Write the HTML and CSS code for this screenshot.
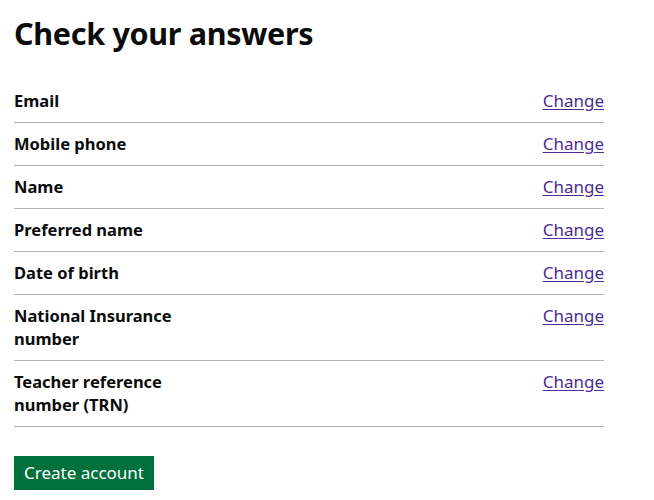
FILE: index.html
```html
<!DOCTYPE html>
<html lang="en">
<head>
<meta charset="utf-8">
<title>Check your answers</title>
<link rel="stylesheet" href="styles.css">
</head>
<body>
<main class="page">
  <h1 class="heading">Check your answers</h1>
  <dl class="summary">
    <div class="row"><dt class="key">Email</dt><dd class="actions"><a class="link" href="#">Change</a></dd></div>
    <div class="row"><dt class="key">Mobile phone</dt><dd class="actions"><a class="link" href="#">Change</a></dd></div>
    <div class="row"><dt class="key">Name</dt><dd class="actions"><a class="link" href="#">Change</a></dd></div>
    <div class="row"><dt class="key">Preferred name</dt><dd class="actions"><a class="link" href="#">Change</a></dd></div>
    <div class="row"><dt class="key">Date of birth</dt><dd class="actions"><a class="link" href="#">Change</a></dd></div>
    <div class="row"><dt class="key">National Insurance number</dt><dd class="actions"><a class="link" href="#">Change</a></dd></div>
    <div class="row"><dt class="key">Teacher reference number (TRN)</dt><dd class="actions"><a class="link" href="#">Change</a></dd></div>
  </dl>
  <button class="button" type="button">Create account</button>
</main>
</body>
</html>
```
FILE: styles.css
```css
html, body {
  margin: 0;
  padding: 0;
  background: #ffffff;
}
body {
  font-family: "Noto Sans", "Liberation Sans", Arial, sans-serif;
  color: #0b0c0c;
}
.page {
  padding: 13px 50px 0 14px;
}
.heading {
  margin: 0 0 27px;
  font-size: 30.5px;
  line-height: 40px;
  font-weight: 700;
  letter-spacing: -0.3px;
}
.summary {
  margin: 0 0 29px;
  padding: 0;
}
.row {
  display: flex;
  border-bottom: 1px solid #b1b4b6;
  padding: 9px 0 10px;
}
.key {
  width: 30%;
  margin: 0;
  font-size: 16.5px;
  line-height: 23px;
  font-weight: 700;
}
.actions {
  flex: 1;
  margin: 0;
  text-align: right;
  font-size: 17px;
  line-height: 23px;
}
.link {
  color: #4c2c92;
  text-decoration: underline;
  text-underline-offset: 2px;
}
.button {
  font-family: inherit;
  font-size: 17px;
  line-height: 19px;
  color: #ffffff;
  background: #00703c;
  border: 0;
  border-radius: 0;
  padding: 7px 10px 8px;
  box-shadow: 0 2px 0 #002d18;
  margin: 0;
  cursor: pointer;
}
```
